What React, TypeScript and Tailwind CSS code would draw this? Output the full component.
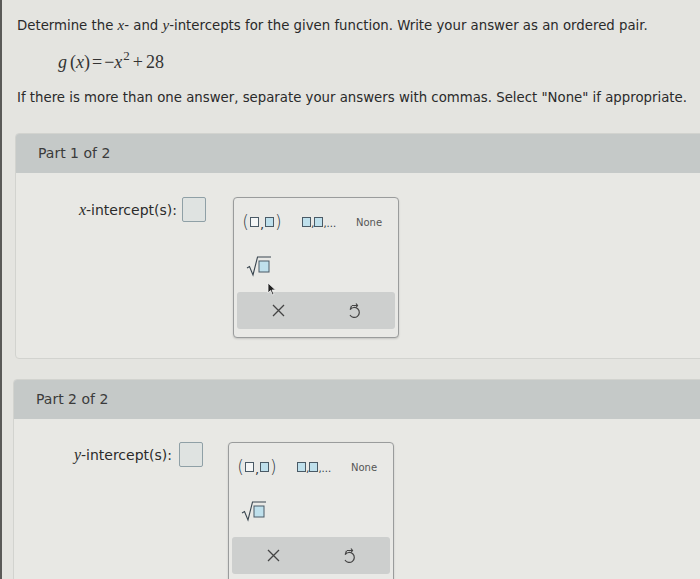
import React from "react";

const sans = { fontFamily: '"DejaVu Sans", Verdana, sans-serif' };
const serif = { fontFamily: '"Liberation Serif", "Times New Roman", serif' };

function Sq({ blue }: { blue?: boolean }) {
  return (
    <span
      className={
        "inline-block w-[9px] h-[10px] border border-[#4a5a66] align-middle " +
        (blue ? "bg-[#bfe0ec]" : "bg-[#f4f6f6]")
      }
    />
  );
}

function Keypad({ cursor }: { cursor?: boolean }) {
  return (
    <div className="relative w-[166px] h-[141px] border border-[#9a9c9c] rounded-[4px] bg-[#e9e9e6] shadow-[0_1px_2px_rgba(0,0,0,0.15)] flex flex-col">
      <div className="flex items-center h-[46px] pt-[2px] text-[#2f3a44]">
        <div className="w-[56px] flex justify-center items-center gap-[1px] text-[17px] leading-none" style={sans}>
          <span className="font-light">(</span>
          <Sq />
          <span className="text-[13px] -mb-[4px]">,</span>
          <Sq blue />
          <span className="font-light">)</span>
        </div>
        <div className="w-[58px] flex justify-center items-center text-[11px] leading-none" style={sans}>
          <Sq blue />
          <span className="-mb-[3px]">,</span>
          <Sq blue />
          <span className="-mb-[3px] text-[10px]">,...</span>
        </div>
        <div className="w-[42px] flex justify-center text-[10px] text-[#555]" style={sans}>
          None
        </div>
      </div>
      <div className="flex items-center h-[44px] pl-[12px]">
        <svg width="26" height="22" viewBox="0 0 26 22">
          <path d="M1 13 L3.5 11.5 L7 20 L11.5 2 L25 2" fill="none" stroke="#3a4650" strokeWidth="1.1" />
          <rect x="13" y="6" width="10" height="11" fill="#bfe0ec" stroke="#4a5a66" strokeWidth="1" />
        </svg>
      </div>
      <div className="mx-[3px] mt-[4px] h-[37px] rounded-[3px] bg-[#cdcfce] flex items-center">
        <div className="w-[82px] flex justify-center">
          <svg width="13" height="13" viewBox="0 0 13 13">
            <path d="M1 1 L12 12 M12 1 L1 12" stroke="#444" strokeWidth="1.3" />
          </svg>
        </div>
        <div className="w-[70px] flex justify-center">
          <svg width="14" height="16" viewBox="0 0 14 16">
            <path d="M5 2.5 L10 2.5 M4.5 2.8 L3.2 6.6 A5 5 0 1 1 3 12" fill="none" stroke="#444" strokeWidth="1.2" />
            <path d="M9 0.5 L10.5 2.5 L9 4.5" fill="none" stroke="#444" strokeWidth="1.2" />
          </svg>
        </div>
      </div>
      {cursor && (
        <svg className="absolute left-[33px] top-[84px]" width="9" height="14" viewBox="0 0 9 14">
          <path d="M1 1 L1 11 L3.5 8.5 L5.5 13 L7 12.3 L5 8 L8.5 8 Z" fill="#222" stroke="#f2f2f2" strokeWidth="0.8" />
        </svg>
      )}
    </div>
  );
}

function Part({
  n,
  label,
  cursor,
  second,
}: {
  n: number;
  label: "x" | "y";
  cursor?: boolean;
  second?: boolean;
}) {
  return (
    <div className={"-mr-[10px] border border-[#d2d3cf] rounded-[4px] overflow-hidden bg-[#e8e8e4] " + (second ? "-ml-[2px]" : "")}>
      <div className="h-[39px] bg-[#c5c9c8] flex items-center pl-[22px] text-[14px] text-[#3b3b3b]" style={sans}>
        Part {n} of 2
      </div>
      <div className={"h-[185px] flex items-start " + (second ? "pt-[23px]" : "pt-[24px]")}>
        <div
          className={
            "flex justify-end items-center h-[26px] text-[14px] text-[#2b2b2b] " +
            (second ? "w-[158px]" : "w-[161px]")
          }
          style={sans}
        >
          <span className="italic text-[16px]" style={serif}>{label}</span>
          <span>-intercept(s):</span>
        </div>
        <div className={"w-[24px] h-[25px] border border-[#8fa0a6] rounded-[2px] bg-[#dfe3e1] " + (second ? "ml-[7px]" : "ml-[5px]")} />
        <div className={second ? "ml-[25px]" : "ml-[27px]"}>
          <Keypad cursor={cursor} />
        </div>
      </div>
    </div>
  );
}

export default function App() {
  return (
    <div className="w-[700px] h-[579px] overflow-hidden bg-[#e4e4e0] border-l-2 border-[#5a5a58]">
      <div className="pl-[15px] pt-[15px] text-[#2a2a2a]" style={sans}>
        <p className="text-[13.3px] leading-[20px]">
          Determine the <span className="italic text-[15px]" style={serif}>x</span>- and{" "}
          <span className="italic text-[15px]" style={serif}>y</span>-intercepts for the given function. Write your answer as an ordered pair.
        </p>
        <div className="pl-[41px] mt-[13px] h-[26px] flex items-baseline text-[18px] leading-[26px] text-[#333]" style={serif}>
          <span className="italic">g</span>
          <span className="ml-[3px]">(</span>
          <span className="italic">x</span>
          <span>)</span>
          <span className="mx-[2px]">=</span>
          <span>−</span>
          <span className="italic">x</span>
          <span className="text-[13px] relative -top-[8px] ml-[1px]">2</span>
          <span className="mx-[3px]">+</span>
          <span>28</span>
        </div>
        <p className="mt-[13px] text-[13.3px] leading-[20px]">
          If there is more than one answer, separate your answers with commas. Select "None" if appropriate.
        </p>
      </div>
      <div className="ml-[13px] mt-[25px] flex flex-col gap-[20px]">
        <Part n={1} label="x" cursor />
        <Part n={2} label="y" second />
      </div>
    </div>
  );
}
